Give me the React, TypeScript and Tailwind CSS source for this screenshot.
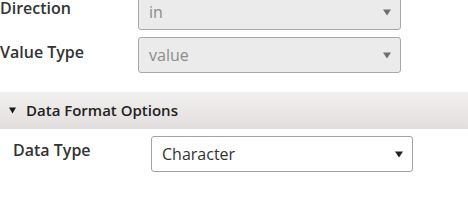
const font = { fontFamily: '"Open Sans", "Liberation Sans", sans-serif' };

function Caret({ className }: { className: string }) {
  return (
    <svg width="8" height="7" viewBox="0 0 8 7" className={className}>
      <path d="M0 0.5h8L4 6.5z" fill="currentColor" />
    </svg>
  );
}

function FakeSelect({
  value,
  disabled,
  className,
}: {
  value: string;
  disabled?: boolean;
  className: string;
}) {
  return (
    <div
      className={`flex h-[36px] items-center justify-between rounded-[3px] border pl-[10px] pr-[9px] text-[16px] ${
        disabled
          ? "border-[#a8a8a8] bg-[#ebebeb] text-[#8c8c8c]"
          : "border-[#a3a3a3] bg-white text-[#333]"
      } ${className}`}
    >
      <span>{value}</span>
      <Caret className={disabled ? "text-[#6f6f6f]" : "text-[#222]"} />
    </div>
  );
}

export default function App() {
  return (
    <div className="h-[209px] w-[468px] overflow-hidden bg-white" style={font}>
      <div className="-mt-[6px] flex flex-col gap-[7px]">
        <div className="flex items-start">
          <div className="w-[138px] pt-[6px] text-[16px] font-semibold leading-[16px] text-[#333]">
            Direction
          </div>
          <FakeSelect value="in" disabled className="w-[263px]" />
        </div>
        <div className="flex items-start">
          <div className="w-[138px] pt-[7px] text-[16px] font-semibold leading-[16px] text-[#333]">
            Value Type
          </div>
          <FakeSelect value="value" disabled className="w-[263px]" />
        </div>
      </div>

      <div className="mt-[19px] flex h-[37px] items-center bg-gradient-to-b from-[#f3f1f0] to-[#e1dedd] pl-[9px]">
        <svg width="7" height="7" viewBox="0 0 7 7" className="text-[#1a1a1a]">
          <path d="M0 0.5h7L3.5 6.5z" fill="currentColor" />
        </svg>
        <span className="ml-[10px] text-[15px] font-semibold text-[#222]">
          Data Format Options
        </span>
      </div>

      <div className="mt-[7px] flex items-start pl-[13px]">
        <div className="w-[138px] pt-[6px] text-[16px] font-semibold leading-[16px] text-[#333]">
          Data Type
        </div>
        <FakeSelect value="Character" className="w-[262px]" />
      </div>
    </div>
  );
}
